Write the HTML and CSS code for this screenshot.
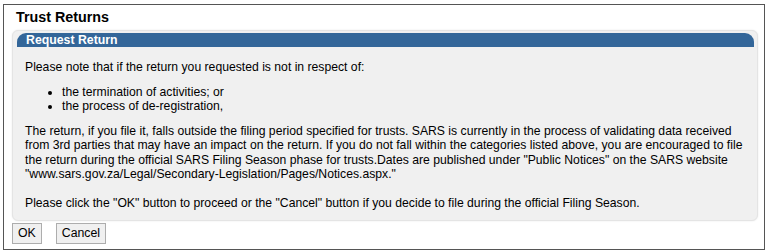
FILE: index.html
```html
<!DOCTYPE html>
<html lang="en">
<head>
    <meta charset="UTF-8">
    <title>Trust Returns</title>
    <link rel="stylesheet" href="styles.css">
</head>
<body>
    <div class="frame">
        <h1 class="title">Trust Returns</h1>
        <div class="panel">
            <div class="panel-head">Request Return</div>
            <div class="panel-body">
                <p>Please note that if the return you requested is not in respect of:</p>
                <ul>
                    <li>the termination of activities; or</li>
                    <li>the process of de-registration,</li>
                </ul>
                <p>The return, if you file it, falls outside the filing period specified for trusts. SARS is currently in the process of validating data received from 3rd parties that may have an impact on the return. If you do not fall within the categories listed above, you are encouraged to file the return during the official SARS Filing Season phase for trusts.Dates are published under "Public Notices" on the SARS website "www.sars.gov.za/Legal/Secondary-Legislation/Pages/Notices.aspx."</p>
                <p class="last">Please click the "OK" button to proceed or the "Cancel" button if you decide to file during the official Filing Season.</p>
            </div>
        </div>
        <div class="actions">
            <button>OK</button>
            <button>Cancel</button>
        </div>
    </div>
</body>
</html>
```
FILE: styles.css
```css
body {
    margin: 0;
    font-family: "Liberation Sans", Arial, sans-serif;
    font-size: 12.2px;
    line-height: 14.5px;
    color: #000;
    background: #fff;
}
.frame {
    margin: 4px 3px 0 3px;
    height: 246px;
    border: 1px solid #555;
    box-sizing: border-box;
}
.title {
    margin: 0;
    padding: 3px 0 0 12px;
    font-size: 14.3px;
    line-height: 18px;
    font-weight: bold;
}
.panel {
    margin: 4px 6px 0 8px;
    padding: 2px 3px 9px 4px;
    background: #f0f0f0;
    border: 1px solid #e4e4e4;
    border-radius: 6px;
    box-shadow: 0 0 2px #e8e8e8;
}
.panel-head {
    background: #336699;
    color: #fff;
    font-weight: bold;
    font-size: 12.3px;
    padding: 0 9px;
    height: 14px;
    line-height: 14px;
    border-radius: 9px 9px 0 0;
}
.panel-body {
    padding: 13px 3px 0 8px;
}
.panel-body p {
    margin: 0;
}
.panel-body ul {
    margin: 10px 0;
    padding-left: 37px;
}
.panel-body p.last {
    margin-top: 14.5px;
}
.actions {
    display: flex;
    gap: 14px;
    margin: 2px 0 0 8px;
}
.actions button {
    font-family: inherit;
    font-size: 12.3px;
    padding: 0 5px;
    height: 21px;
    background: #f0f0f0;
    border: 1px solid #adadad;
    border-radius: 0;
    color: #000;
}
```
